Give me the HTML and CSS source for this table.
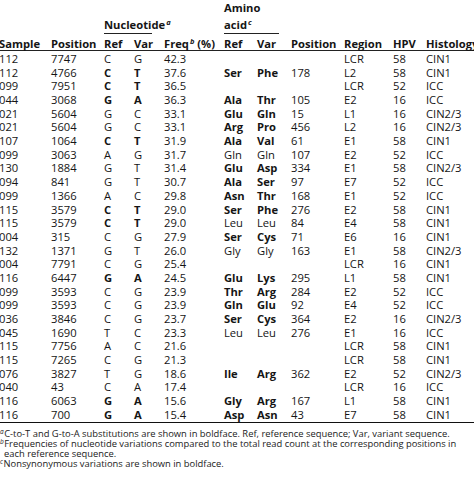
FILE: index.html
```html
<!DOCTYPE html>
<html>
<head>
<meta charset="utf-8">
<link rel="stylesheet" href="styles.css">
</head>
<body>
<div class="tbl">
  <div class="g grp-row">
    <div class="grp nuc">Nucleotide<sup>a</sup></div>
    <div class="grp aa">Amino<br>acid<sup>c</sup></div>
  </div>
  <div class="g hdr">
    <div>Sample</div><div>Position</div><div>Ref</div><div>Var</div><div>Freq<sup>b</sup> (%)</div><div>Ref</div><div>Var</div><div>Position</div><div>Region</div><div>HPV</div><div>Histology</div>
  </div>
  <div class="body">
    <div class="g row"><div>112</div><div>7747</div><div>C</div><div>G</div><div>42.3</div><div></div><div></div><div></div><div>LCR</div><div>58</div><div>CIN1</div></div>
    <div class="g row"><div>112</div><div>4766</div><div class="b">C</div><div class="b">T</div><div>37.6</div><div class="b">Ser</div><div class="b">Phe</div><div>178</div><div>L2</div><div>58</div><div>CIN1</div></div>
    <div class="g row"><div>099</div><div>7951</div><div class="b">C</div><div class="b">T</div><div>36.5</div><div></div><div></div><div></div><div>LCR</div><div>52</div><div>ICC</div></div>
    <div class="g row"><div>044</div><div>3068</div><div class="b">G</div><div class="b">A</div><div>36.3</div><div class="b">Ala</div><div class="b">Thr</div><div>105</div><div>E2</div><div>16</div><div>ICC</div></div>
    <div class="g row"><div>021</div><div>5604</div><div>G</div><div>C</div><div>33.1</div><div class="b">Glu</div><div class="b">Gln</div><div>15</div><div>L1</div><div>16</div><div>CIN2/3</div></div>
    <div class="g row"><div>021</div><div>5604</div><div>G</div><div>C</div><div>33.1</div><div class="b">Arg</div><div class="b">Pro</div><div>456</div><div>L2</div><div>16</div><div>CIN2/3</div></div>
    <div class="g row"><div>107</div><div>1064</div><div class="b">C</div><div class="b">T</div><div>31.9</div><div class="b">Ala</div><div class="b">Val</div><div>61</div><div>E1</div><div>58</div><div>CIN1</div></div>
    <div class="g row"><div>099</div><div>3063</div><div>A</div><div>G</div><div>31.7</div><div>Gln</div><div>Gln</div><div>107</div><div>E2</div><div>52</div><div>ICC</div></div>
    <div class="g row"><div>130</div><div>1884</div><div>G</div><div>T</div><div>31.4</div><div class="b">Glu</div><div class="b">Asp</div><div>334</div><div>E1</div><div>58</div><div>CIN2/3</div></div>
    <div class="g row"><div>094</div><div>841</div><div>G</div><div>T</div><div>30.7</div><div class="b">Ala</div><div class="b">Ser</div><div>97</div><div>E7</div><div>52</div><div>ICC</div></div>
    <div class="g row"><div>099</div><div>1366</div><div>A</div><div>C</div><div>29.8</div><div class="b">Asn</div><div class="b">Thr</div><div>168</div><div>E1</div><div>52</div><div>ICC</div></div>
    <div class="g row"><div>115</div><div>3579</div><div class="b">C</div><div class="b">T</div><div>29.0</div><div class="b">Ser</div><div class="b">Phe</div><div>276</div><div>E2</div><div>58</div><div>CIN1</div></div>
    <div class="g row"><div>115</div><div>3579</div><div class="b">C</div><div class="b">T</div><div>29.0</div><div>Leu</div><div>Leu</div><div>84</div><div>E4</div><div>58</div><div>CIN1</div></div>
    <div class="g row"><div>004</div><div>315</div><div>C</div><div>G</div><div>27.9</div><div class="b">Ser</div><div class="b">Cys</div><div>71</div><div>E6</div><div>16</div><div>CIN1</div></div>
    <div class="g row"><div>132</div><div>1371</div><div>G</div><div>T</div><div>26.0</div><div>Gly</div><div>Gly</div><div>163</div><div>E1</div><div>58</div><div>CIN2/3</div></div>
    <div class="g row"><div>004</div><div>7791</div><div>C</div><div>G</div><div>25.4</div><div></div><div></div><div></div><div>LCR</div><div>16</div><div>CIN1</div></div>
    <div class="g row"><div>116</div><div>6447</div><div class="b">G</div><div class="b">A</div><div>24.5</div><div class="b">Glu</div><div class="b">Lys</div><div>295</div><div>L1</div><div>58</div><div>CIN1</div></div>
    <div class="g row"><div>099</div><div>3593</div><div>C</div><div>G</div><div>23.9</div><div class="b">Thr</div><div class="b">Arg</div><div>284</div><div>E2</div><div>52</div><div>ICC</div></div>
    <div class="g row"><div>099</div><div>3593</div><div>C</div><div>G</div><div>23.9</div><div class="b">Gln</div><div class="b">Glu</div><div>92</div><div>E4</div><div>52</div><div>ICC</div></div>
    <div class="g row"><div>036</div><div>3846</div><div>C</div><div>G</div><div>23.7</div><div class="b">Ser</div><div class="b">Cys</div><div>364</div><div>E2</div><div>16</div><div>CIN2/3</div></div>
    <div class="g row"><div>045</div><div>1690</div><div>T</div><div>C</div><div>23.3</div><div>Leu</div><div>Leu</div><div>276</div><div>E1</div><div>16</div><div>ICC</div></div>
    <div class="g row"><div>115</div><div>7756</div><div>A</div><div>C</div><div>21.6</div><div></div><div></div><div></div><div>LCR</div><div>58</div><div>CIN1</div></div>
    <div class="g row"><div>115</div><div>7265</div><div>C</div><div>G</div><div>21.3</div><div></div><div></div><div></div><div>LCR</div><div>58</div><div>CIN1</div></div>
    <div class="g row"><div>076</div><div>3827</div><div>T</div><div>G</div><div>18.6</div><div class="b">Ile</div><div class="b">Arg</div><div>362</div><div>E2</div><div>52</div><div>CIN2/3</div></div>
    <div class="g row"><div>040</div><div>43</div><div>C</div><div>A</div><div>17.4</div><div></div><div></div><div></div><div>LCR</div><div>16</div><div>ICC</div></div>
    <div class="g row"><div>116</div><div>6063</div><div class="b">G</div><div class="b">A</div><div>15.6</div><div class="b">Gly</div><div class="b">Arg</div><div>167</div><div>L1</div><div>58</div><div>CIN1</div></div>
    <div class="g row"><div>116</div><div>700</div><div class="b">G</div><div class="b">A</div><div>15.4</div><div class="b">Asp</div><div class="b">Asn</div><div>43</div><div>E7</div><div>58</div><div>CIN1</div></div>
  </div>
  <div class="notes">
    <p class="fn"><sup>a</sup>C-to-T and G-to-A substitutions are shown in boldface. Ref, reference sequence; Var, variant sequence.</p>
    <p class="fn"><span class="jl"><sup>b</sup>Frequencies of nucleotide variations compared to the total read count at the corresponding positions in</span><span class="l2">each reference sequence.</span></p>
    <p class="fn"><sup>c</sup>Nonsynonymous variations are shown in boldface.</p>
  </div>
</div>
</body>
</html>
```

FILE: styles.css
```css
html, body {
  margin: 0;
  padding: 0;
  background: #ffffff;
}

body {
  font-family: "Open Sans", "Noto Sans", "Liberation Sans", sans-serif;
  color: #151515;
  font-size: 11.2px;
  overflow: hidden;
}

.tbl {
  margin-left: -1px;
  width: 476px;
}

.g {
  display: grid;
  grid-template-columns: 52px 53px 30px 30px 60px 33px 34px 53px 49px 33px 1fr;
  white-space: nowrap;
}

.grp-row {
  height: 36.5px;
  align-items: end;
}

.grp {
  font-weight: 700;
  line-height: 16.7px;
  border-bottom: 1px solid #222;
  margin-right: 12px;
  margin-bottom: 5.5px;
}

.nuc {
  grid-column: 3 / 5;
}

.aa {
  grid-column: 6 / 8;
}

sup {
  font-size: 7.5px;
  font-style: italic;
  line-height: 0;
  vertical-align: 4px;
  margin-left: 1px;
}

.hdr {
  height: 13.7px;
  line-height: 13.7px;
  font-weight: 700;
  border-bottom: 1px solid #222;
}

.body {
  padding-top: 0.8px;
  border-bottom: 1.5px solid #111;
}

.row {
  height: 13.69px;
  line-height: 13.69px;
}

.b {
  font-weight: 700;
}

.notes {
  margin-top: 6px;
  padding-left: 1px;
  width: 448px;
  color: #222;
  font-size: 9.4px;
  line-height: 10.3px;
}

.fn {
  margin: 0;
  white-space: nowrap;
}

.fn sup {
  font-size: 6.5px;
  vertical-align: 3px;
  margin-left: 0;
  margin-right: 0.5px;
}

.jl {
  display: block;
  text-align: justify;
  text-align-last: justify;
}

.l2 {
  display: block;
  padding-left: 4px;
}
```
